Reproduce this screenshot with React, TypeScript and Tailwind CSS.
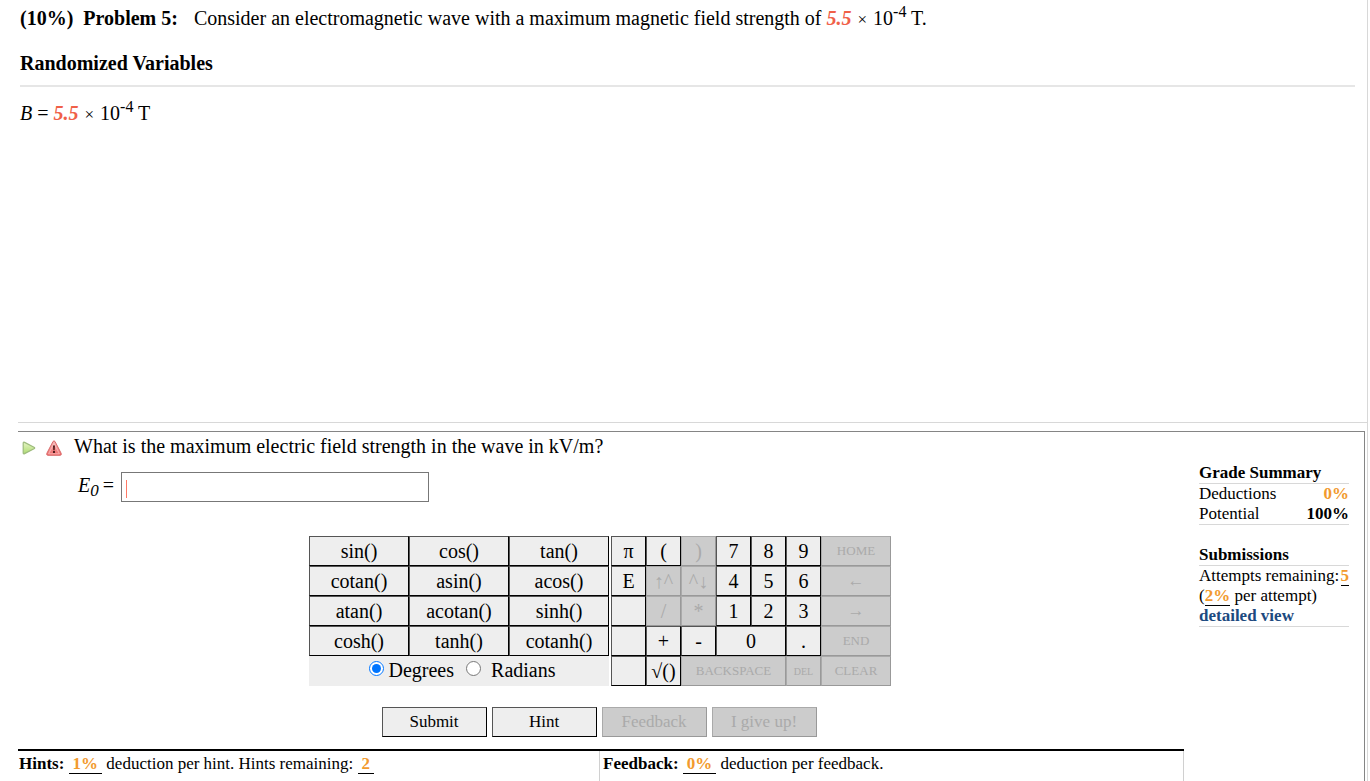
import { useState } from 'react';
import { clsx } from 'clsx';

type Key = {
  label: string;
  name?: string;
  wide?: boolean;
  disabled?: boolean;
  size?: string;
};

const trigFunctions = [
  'sin()',
  'cos()',
  'tan()',
  'cotan()',
  'asin()',
  'acos()',
  'atan()',
  'acotan()',
  'sinh()',
  'cosh()',
  'tanh()',
  'cotanh()',
];

const keys: Key[] = [
  { label: 'π' },
  { label: '(' },
  { label: ')', disabled: true },
  { label: '7' },
  { label: '8' },
  { label: '9' },
  { label: 'HOME', wide: true, disabled: true, size: 'text-[13px]' },
  { label: 'E' },
  { label: '↑^', disabled: true },
  { label: '^↓', disabled: true },
  { label: '4' },
  { label: '5' },
  { label: '6' },
  { label: '←', wide: true, disabled: true, size: 'text-[17px]' },
  { label: '', name: 'empty' },
  { label: '/', disabled: true },
  { label: '*', disabled: true },
  { label: '1' },
  { label: '2' },
  { label: '3' },
  { label: '→', wide: true, disabled: true, size: 'text-[17px]' },
  { label: '', name: 'empty' },
  { label: '+' },
  { label: '-' },
  { label: '0', wide: true },
  { label: '.' },
  { label: 'END', wide: true, disabled: true, size: 'text-[13px]' },
  { label: '', name: 'empty' },
  { label: '√()' },
];

const editKeys: Key[] = [
  { label: 'DEL', disabled: true, size: 'text-[10px]' },
  { label: 'CLEAR', wide: true, disabled: true, size: 'text-[13px]' },
];

const enabledStyle =
  'bg-[#eeeeee] text-black border-t-[#555555] border-l-[#555555] border-b-black border-r-black';
const disabledStyle =
  'bg-[#cccccc] text-[#aaaaaa] border-t-[#aaaaaa] border-l-[#aaaaaa] border-b-[#999999] border-r-[#999999]';

function KeyButton({ label, name, wide, disabled, size = 'text-xl' }: Key) {
  return (
    <button
      type="button"
      disabled={disabled}
      aria-label={name}
      className={clsx(
        'flex h-[30px] items-center justify-center border whitespace-nowrap',
        wide && 'col-span-2',
        size,
        disabled ? disabledStyle : enabledStyle,
      )}
    >
      {label}
    </button>
  );
}

function ActionButton({ label, disabled }: Key) {
  return (
    <button
      type="button"
      disabled={disabled}
      className={clsx(
        'h-[30px] w-[105px] border text-[17px] leading-6',
        disabled ? disabledStyle : enabledStyle,
      )}
    >
      {label}
    </button>
  );
}

function FieldStrength() {
  return (
    <>
      <b className="text-[#f06048] italic">5.5</b>{' '}
      <span className="mx-px text-[17px]">×</span> 10
      <sup className="text-base">-4</sup> T
    </>
  );
}

function PlayIcon() {
  return (
    <svg width="14" height="14" viewBox="0 0 14 14" aria-hidden="true">
      <defs>
        <linearGradient id="play" x1="0" y1="0" x2="0" y2="1">
          <stop offset="0" stopColor="#e6f5c4" />
          <stop offset="1" stopColor="#aedb72" />
        </linearGradient>
      </defs>
      <path
        d="M1.2 2.2Q1.2 .8 2.6 1.4L12 6.2Q13.4 7 12 7.8L2.6 12.6Q1.2 13.2 1.2 11.8Z"
        fill="url(#play)"
        stroke="#9dbb7c"
        strokeWidth="1.2"
      />
    </svg>
  );
}

function WarningIcon() {
  return (
    <svg width="16" height="16" viewBox="0 0 16 16" aria-hidden="true">
      <defs>
        <linearGradient id="warning" x1="0" y1="0" x2="0" y2="1">
          <stop offset="0" stopColor="#f5b5b5" />
          <stop offset="1" stopColor="#ee6a6a" />
        </linearGradient>
      </defs>
      <path
        d="M7 1.5Q8 .2 9 1.5L15.2 13.4Q15.8 15.3 14 15.3H2Q.2 15.3 .8 13.4Z"
        fill="url(#warning)"
        stroke="#d96b6b"
        strokeWidth="1"
      />
      <path d="M8 3.4L2.6 13.8H13.4Z" fill="none" stroke="#f9caca" strokeWidth=".7" />
      <path d="M7 5.4H9L8.7 10.2H7.3Z" fill="#521c1c" />
      <rect x="7" y="11" width="2" height="2" fill="#521c1c" />
    </svg>
  );
}

function Problem() {
  return (
    <section className="ml-[18px] h-[423px] border-b border-[#d8d8d8] pr-3 pl-0.5 text-xl leading-7">
      <p className="flex items-baseline pt-1">
        <b className="mr-4 whitespace-pre">(10%)  Problem 5:</b>
        <span className="leading-0">
          Consider an electromagnetic wave with a maximum magnetic field
          strength of <FieldStrength />.
        </span>
      </p>
      <h2 className="mt-[17px] border-b-2 border-[#e6e6e6] pb-2 font-bold">
        Randomized Variables
      </h2>
      <p className="mt-3">
        <i>B</i> = <FieldStrength />
      </p>
    </section>
  );
}

function Calculator() {
  const [unit, setUnit] = useState('degrees');

  return (
    <div className="mt-[34px] flex justify-center gap-0.5 pr-0.5">
      <div className="w-[300px] bg-[#eeeeee]">
        <div className="grid grid-cols-3">
          {trigFunctions.map((label) => (
            <KeyButton key={label} label={label} />
          ))}
        </div>
        <div className="flex h-[30px] items-center justify-center pb-0.5 pl-1.5 text-xl">
          <input
            id="degrees"
            type="radio"
            name="unit"
            checked={unit === 'degrees'}
            onChange={() => setUnit('degrees')}
            className="mr-[5px] mb-1 size-[15px]"
          />
          <label htmlFor="degrees">Degrees</label>
          <input
            id="radians"
            type="radio"
            name="unit"
            checked={unit === 'radians'}
            onChange={() => setUnit('radians')}
            className="mr-2.5 mb-1 ml-3 size-[15px]"
          />
          <label htmlFor="radians">Radians</label>
        </div>
      </div>
      <div className="grid w-[280px] grid-cols-8">
        {keys.map((key, index) => (
          <KeyButton key={index} {...key} />
        ))}
        <button
          type="button"
          disabled
          className={clsx(
            'col-span-3 h-[30px] border text-[13px]',
            disabledStyle,
          )}
        >
          BACKSPACE
        </button>
        {editKeys.map((key) => (
          <KeyButton key={key.label} {...key} />
        ))}
      </div>
    </div>
  );
}

function Summary() {
  return (
    <aside className="mt-[31px] mr-[15px] w-[150px] leading-5">
      <h3 className="border-b border-[#d8d8d8] font-bold">Grade Summary</h3>
      <dl className="border-b border-[#d8d8d8]">
        <div className="flex justify-between">
          <dt>Deductions</dt>
          <dd className="font-bold text-[#f29a2e]">0%</dd>
        </div>
        <div className="flex justify-between">
          <dt>Potential</dt>
          <dd className="font-bold">100%</dd>
        </div>
      </dl>
      <h3 className="mt-5 border-b border-[#d8d8d8] font-bold">Submissions</h3>
      <div className="border-b border-[#d8d8d8] whitespace-nowrap">
        <p className="flex justify-between">
          <span>Attempts remaining:</span>
          <b className="h-5 border-b border-black leading-5 text-[#f29a2e]">
            5
          </b>
        </p>
        <p>
          (<b className="border-b border-black text-[#f29a2e]">2%</b> per
          attempt)
        </p>
        <a href="#details" className="block font-bold text-[#1c4a80]">
          detailed view
        </a>
      </div>
    </aside>
  );
}

function Deductions() {
  return (
    <footer className="mt-3 grid grid-cols-2 border-t-2 border-black leading-6">
      <p className="h-[30px] pt-px pl-px">
        <b>Hints:</b>{' '}
        <b className="border-b border-black px-1 text-[#f29a2e]">1%</b>{' '}
        deduction per hint. Hints remaining:{' '}
        <b className="border-b border-black px-1 text-[#f29a2e]">2</b>
      </p>
      <p className="-ml-0.5 h-[30px] border-x border-[#d0d0d0] pt-px pl-[3px]">
        <b>Feedback:</b>{' '}
        <b className="border-b border-black px-1 text-[#f29a2e]">0%</b>{' '}
        deduction per feedback.
      </p>
    </footer>
  );
}

export default function App() {
  const [answer, setAnswer] = useState('');

  return (
    <div className="min-h-screen bg-white pr-0.5 font-['Liberation_Serif','Times_New_Roman',serif] text-[17px] text-black">
      <div className="border-r border-[#d8d8d8]">
        <Problem />
        <main className="mt-2 mr-0.5 ml-[18px] flex gap-[15px] border-t border-r border-[#858585]">
          <div className="min-w-0 flex-1">
            <div className="flex items-center pl-1 text-xl leading-7">
              <div className="mt-1 mr-3 flex items-center gap-2.5">
                <PlayIcon />
                <WarningIcon />
              </div>
              <h2>What is the maximum electric field strength in the wave in kV/m?</h2>
            </div>
            <div className="mt-3 flex items-center pl-[60px]">
              <label
                htmlFor="answer"
                className="mr-[7px] mb-1 flex gap-1 text-xl leading-6"
              >
                <i>
                  E<sub className="text-[17px]">0</sub>
                </i>
                =
              </label>
              <div className="relative">
                <input
                  id="answer"
                  value={answer}
                  onChange={(e) => setAnswer(e.target.value)}
                  className="block h-[30px] w-[308px] border border-[#777777] px-2 text-xl"
                />
                <span className="pointer-events-none absolute top-2 left-[5px] z-10 h-[18px] w-px bg-[#ff7a66]" />
              </div>
            </div>
            <Calculator />
            <div className="mt-[21px] flex justify-center gap-[5px] pr-1">
              <ActionButton label="Submit" />
              <ActionButton label="Hint" />
              <ActionButton label="Feedback" disabled />
              <ActionButton label="I give up!" disabled />
            </div>
            <Deductions />
          </div>
          <Summary />
        </main>
      </div>
    </div>
  );
}
